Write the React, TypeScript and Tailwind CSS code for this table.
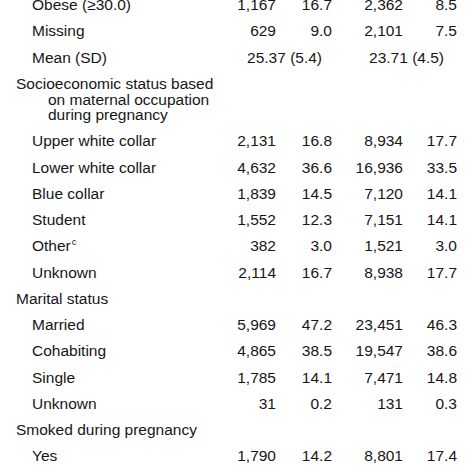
type Row =
  | { kind: 'head'; label: string }
  | { kind: 'item'; label: string; sup?: string; n1: string; p1: string; n2: string; p2: string }
  | { kind: 'mean'; label: string; a: string; b: string }

const rows: Row[] = [
  { kind: 'item', label: 'Obese (≥30.0)', n1: '1,167', p1: '16.7', n2: '2,362', p2: '8.5' },
  { kind: 'item', label: 'Missing', n1: '629', p1: '9.0', n2: '2,101', p2: '7.5' },
  { kind: 'mean', label: 'Mean (SD)', a: '25.37 (5.4)', b: '23.71 (4.5)' },
]

const rest: Row[] = [
  { kind: 'item', label: 'Upper white collar', n1: '2,131', p1: '16.8', n2: '8,934', p2: '17.7' },
  { kind: 'item', label: 'Lower white collar', n1: '4,632', p1: '36.6', n2: '16,936', p2: '33.5' },
  { kind: 'item', label: 'Blue collar', n1: '1,839', p1: '14.5', n2: '7,120', p2: '14.1' },
  { kind: 'item', label: 'Student', n1: '1,552', p1: '12.3', n2: '7,151', p2: '14.1' },
  { kind: 'item', label: 'Other', sup: 'c', n1: '382', p1: '3.0', n2: '1,521', p2: '3.0' },
  { kind: 'item', label: 'Unknown', n1: '2,114', p1: '16.7', n2: '8,938', p2: '17.7' },
  { kind: 'head', label: 'Marital status' },
  { kind: 'item', label: 'Married', n1: '5,969', p1: '47.2', n2: '23,451', p2: '46.3' },
  { kind: 'item', label: 'Cohabiting', n1: '4,865', p1: '38.5', n2: '19,547', p2: '38.6' },
  { kind: 'item', label: 'Single', n1: '1,785', p1: '14.1', n2: '7,471', p2: '14.8' },
  { kind: 'item', label: 'Unknown', n1: '31', p1: '0.2', n2: '131', p2: '0.3' },
  { kind: 'head', label: 'Smoked during pregnancy' },
  { kind: 'item', label: 'Yes', n1: '1,790', p1: '14.2', n2: '8,801', p2: '17.4' },
]

function TableRow({ row }: { row: Row }) {
  if (row.kind === 'head') {
    return <div className="h-[26.25px] leading-[26.25px] pl-[16px] whitespace-nowrap">{row.label}</div>
  }
  if (row.kind === 'mean') {
    return (
      <div className="flex h-[26.25px] leading-[26.25px] whitespace-nowrap">
        <div className="w-[216px] pl-[32px]">{row.label}</div>
        <div className="w-[116px] text-right pr-[10px]">{row.a}</div>
        <div className="w-[125px] text-right pr-[13px]">{row.b}</div>
      </div>
    )
  }
  return (
    <div className="flex h-[26.25px] leading-[26.25px] whitespace-nowrap">
      <div className="w-[216px] pl-[32px]">
        {row.label}
        {row.sup && <span className="text-[9.5px] leading-none relative -top-[6px] ml-[1px]">{row.sup}</span>}
      </div>
      <div className="w-[60px] text-right">{row.n1}</div>
      <div className="w-[56px] text-right">{row.p1}</div>
      <div className="w-[71px] text-right">{row.n2}</div>
      <div className="w-[54px] text-right">{row.p2}</div>
    </div>
  )
}

export default function App() {
  return (
    <div className="w-[474px] h-[474px] overflow-hidden bg-white text-[#161616]" style={{ fontFamily: '"Liberation Sans", Arial, sans-serif' }}>
      <div className="mt-[-8px] text-[15.5px]">
        {rows.map((r, i) => <TableRow key={'a' + i} row={r} />)}
        <div className="pt-[5.4px] pb-[5.85px] leading-[15.5px] whitespace-nowrap">
          <div className="pl-[16px]">Socioeconomic status based</div>
          <div className="pl-[48px]">on maternal occupation</div>
          <div className="pl-[48px]">during pregnancy</div>
        </div>
        {rest.map((r, i) => <TableRow key={'b' + i} row={r} />)}
      </div>
    </div>
  )
}
